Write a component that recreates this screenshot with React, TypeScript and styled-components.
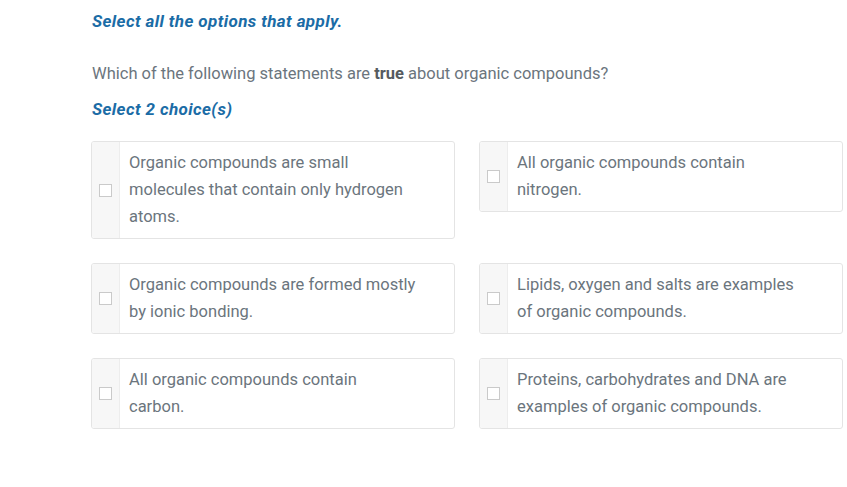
import { createGlobalStyle, styled } from 'styled-components';

const GlobalStyle = createGlobalStyle`
  body {
    margin: 0;
    background: #ffffff;
    font-family: Roboto, 'Liberation Sans', sans-serif;
  }
`;

// line breaks kept as in the original layout
const options = [
  'Organic compounds are small\nmolecules that contain only hydrogen\natoms.',
  'All organic compounds contain\nnitrogen.',
  'Organic compounds are formed mostly\nby ionic bonding.',
  'Lipids, oxygen and salts are examples\nof organic compounds.',
  'All organic compounds contain\ncarbon.',
  'Proteins, carbohydrates and DNA are\nexamples of organic compounds.',
];

const App = () => {
  return (
    <>
      <GlobalStyle />
      <Styled_Quiz.Container>
        <Styled_Quiz.Instruction>Select all the options that apply.</Styled_Quiz.Instruction>
        <Styled_Quiz.Question>
          Which of the following statements are <b>true</b> about organic compounds?
        </Styled_Quiz.Question>
        <Styled_Quiz.Count>Select 2 choice(s)</Styled_Quiz.Count>
        <Styled_Quiz.Grid>
          {options.map((text, i) => (
            <Styled_Quiz.Card key={i}>
              <Styled_Quiz.BoxCol>
                <Styled_Quiz.Box />
              </Styled_Quiz.BoxCol>
              <Styled_Quiz.Label>{text}</Styled_Quiz.Label>
            </Styled_Quiz.Card>
          ))}
        </Styled_Quiz.Grid>
      </Styled_Quiz.Container>
    </>
  );
};

export default App;

const Styled_Quiz = {
  Container: styled.div`
    padding: 10px 0 0 91px;
    width: 752px;
  `,
  Instruction: styled.h2`
    margin: 0 0 0 1px;
    font-size: 17px;
    line-height: 22px;
    letter-spacing: 0.4px;
    font-weight: 700;
    font-style: italic;
    color: #1b6ca6;
  `,
  Question: styled.p`
    margin: 31px 0 0 1px;
    font-size: 16.5px;
    line-height: 22px;
    color: #6b757d;

    b {
      color: #555b60;
    }
  `,
  Count: styled.h3`
    margin: 13px 0 0 1px;
    font-size: 17px;
    line-height: 22px;
    letter-spacing: 0.4px;
    font-weight: 700;
    font-style: italic;
    color: #1b6ca6;
  `,
  Grid: styled.div`
    margin-top: 21px;
    display: grid;
    grid-template-columns: 364px 364px;
    column-gap: 24px;
    row-gap: 24px;
    align-items: start;
  `,
  Card: styled.div`
    display: flex;
    border: 1px solid #e4e4e4;
    border-radius: 3px;
    overflow: hidden;
    background: #fff;
  `,
  BoxCol: styled.div`
    width: 27px;
    flex-shrink: 0;
    background: #f7f7f7;
    border-right: 1px solid #ededed;
    display: flex;
    align-items: center;
    justify-content: center;
  `,
  Box: styled.span`
    width: 13px;
    height: 13px;
    box-sizing: border-box;
    border: 1.5px solid #cacaca;
    background: #fff;
  `,
  Label: styled.div`
    padding: 7px 20px 8px 9px;
    font-size: 16.5px;
    line-height: 27px;
    color: #6b757d;
    white-space: pre-line;
  `,
};
